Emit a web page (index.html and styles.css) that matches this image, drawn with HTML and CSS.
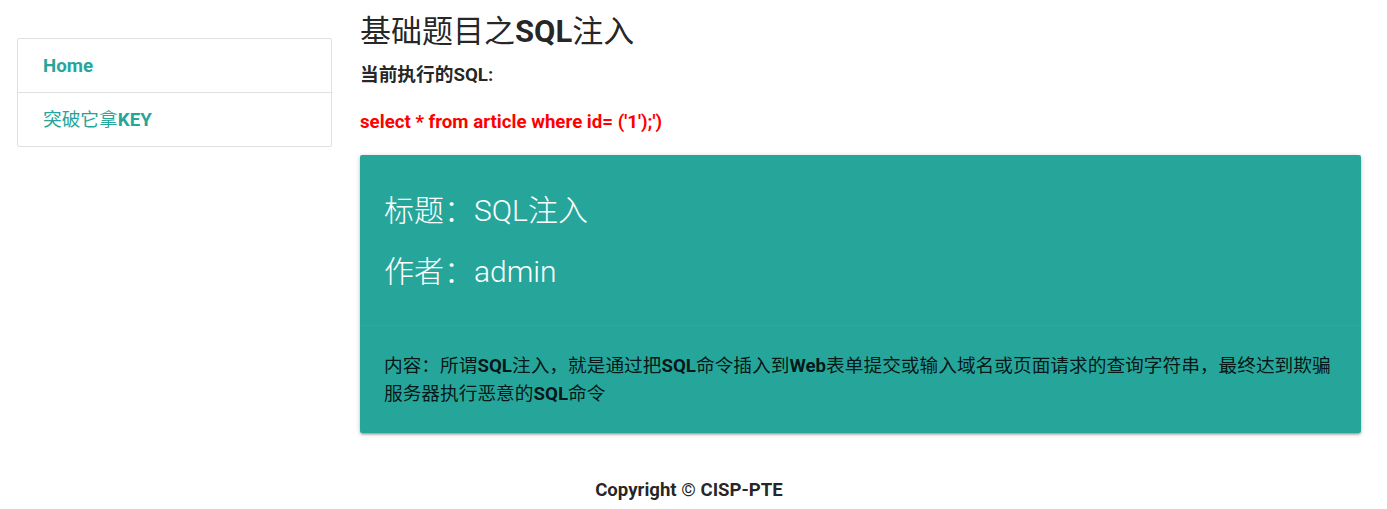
FILE: index.html
```html
<!DOCTYPE html>
<html lang="zh-CN">
<head>
<meta charset="utf-8">
<title>基础题目之SQL注入</title>
<link rel="stylesheet" href="styles.css">
</head>
<body>
<div class="page">
  <div class="row">
    <nav class="side">
      <ul class="collection">
        <li class="collection-item"><a href="#" class="lat">Home</a></li>
        <li class="collection-item"><a href="#">突破它拿<span class="lat">KEY</span></a></li>
      </ul>
    </nav>
    <main class="main">
      <h4 class="title">基础题目之<span class="lat">SQL</span>注入</h4>
      <p class="label">当前执行的SQL:</p>
      <p class="query">select * from article where id= ('1');')</p>
      <div class="card">
        <div class="card-content">
          <p class="card-line">标题：SQL注入</p>
          <p class="card-line">作者：admin</p>
        </div>
        <div class="card-action">
          <p>内容：所谓<span class="lat">SQL</span>注入，就是通过把<span class="lat">SQL</span>命令插入到<span class="lat">Web</span>表单提交或输入域名或页面请求的查询字符串，最终达到欺骗服务器执行恶意的<span class="lat">SQL</span>命令</p>
        </div>
      </div>
    </main>
  </div>
  <footer class="footer">Copyright © CISP-PTE</footer>
</div>
</body>
</html>
```

FILE: styles.css
```css
html, body {
  margin: 0;
  padding: 0;
  background: #fff;
}
body {
  font-family: Roboto, "Noto Sans CJK SC", sans-serif;
  color: rgba(0, 0, 0, 0.87);
  font-size: 18.7px;
  line-height: 1.5;
}
.page {
  padding: 0 26px 0 17px;
}
.row {
  display: flex;
  gap: 28px;
  align-items: flex-start;
}
.side {
  flex: 0 0 315px;
  margin-top: 38px;
}
.collection {
  list-style: none;
  margin: 0;
  padding: 0;
  border: 1px solid #e0e0e0;
  border-radius: 2px;
}
.collection-item {
  box-sizing: border-box;
  height: 54px;
  display: flex;
  align-items: center;
  padding: 2px 25px 0;
  border-bottom: 1px solid #e0e0e0;
  font-size: 18.7px;
}
.collection-item:last-child {
  border-bottom: none;
  height: 53px;
}
.collection-item a {
  color: #26a69a;
  text-decoration: none;
}
.lat {
  font-weight: 700;
}
.main {
  flex: 1 1 auto;
  min-width: 0;
}
.title {
  font-size: 31px;
  line-height: 34px;
  font-weight: 400;
  margin: 15px 0 0;
}
.label {
  margin: 12px 0 0;
  font-weight: 700;
  font-size: 18.7px;
  line-height: 28px;
}
.query {
  margin: 19px 0 0;
  font-weight: 700;
  font-size: 18.7px;
  line-height: 28px;
  color: #ff0000;
}
.card {
  margin-top: 19px;
  background: #26a69a;
  border-radius: 2px;
  box-shadow: 0 2px 2px 0 rgba(0,0,0,0.14), 0 3px 1px -2px rgba(0,0,0,0.12), 0 1px 5px 0 rgba(0,0,0,0.2);
}
.card-content {
  padding: 33px 24px 31px;
  display: flex;
  flex-direction: column;
  gap: 16px;
}
.card-line {
  margin: 0;
  color: #fff;
  font-size: 30px;
  font-weight: 300;
  line-height: 45px;
}
.card-action {
  border-top: 1px solid rgba(160, 160, 160, 0.2);
  padding: 26px 24px 25px;
}
.card-action p {
  margin: 0;
  font-size: 18.7px;
  line-height: 28px;
  color: rgba(0, 0, 0, 0.87);
}
.footer {
  margin-top: 45px;
  text-align: center;
  font-weight: 700;
  font-size: 18.6px;
  line-height: 24px;
}
```
